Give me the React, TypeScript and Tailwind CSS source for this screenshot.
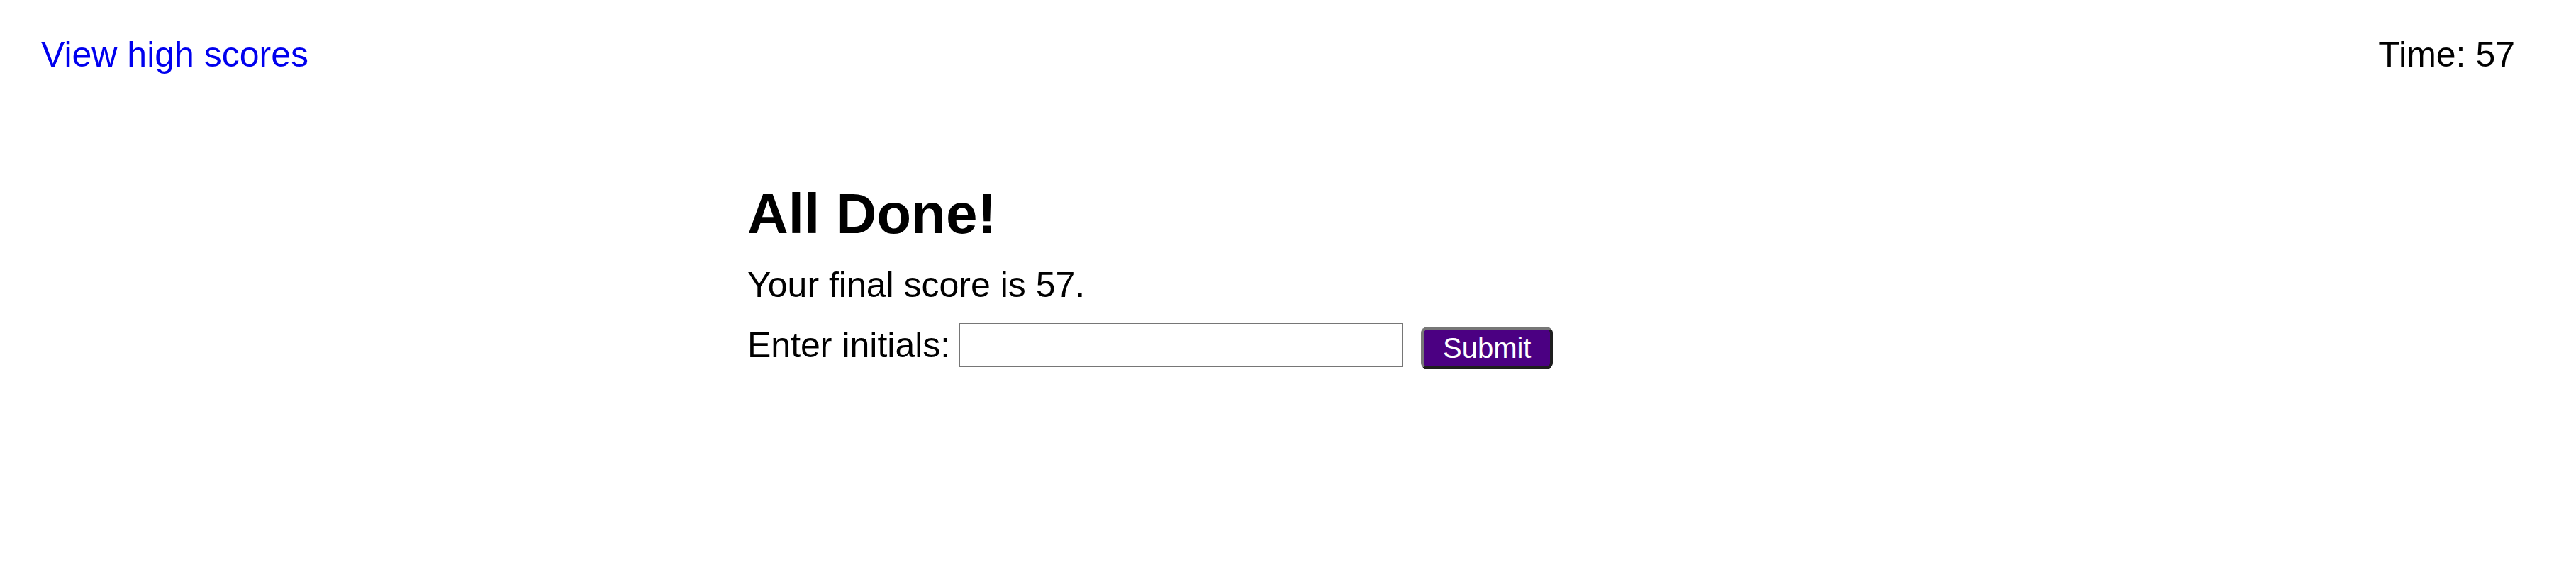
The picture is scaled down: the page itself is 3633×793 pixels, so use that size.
import React from 'react';

export default function App() {
  return (
    <div className="min-h-screen bg-white text-black font-['Liberation_Sans',Arial,sans-serif]">
      <header className="flex items-start justify-between pt-[49px] pl-[58px] pr-[86px] text-[50px] leading-[56px]">
        <a href="#" className="text-[#0000ee]">View high scores</a>
        <div>Time: 57</div>
      </header>

      <main className="mx-auto w-[1525px] pt-[152px]">
        <h1 className="text-[80px] leading-[90px] font-bold">All Done!</h1>
        <p className="mt-[27px] text-[50px] leading-[56px]">Your final score is 57.</p>
        <form className="mt-[26px] flex items-start" onSubmit={(e) => e.preventDefault()}>
          <label htmlFor="initials" className="mt-[3px] text-[50px] leading-[56px]">Enter initials:</label>
          <input
            id="initials"
            type="text"
            className="ml-[13px] w-[625px] h-[62px] border border-[#767676] bg-white px-2 text-[40px] outline-none"
          />
          <button
            type="submit"
            className="ml-[26px] mt-[5px] w-[186px] h-[60px] rounded-[9px] border-4 border-t-[#777777] border-l-[#777777] border-b-[#1e1e1e] border-r-[#1e1e1e] bg-[#4b0082] text-[40px] leading-none text-white"
          >
            Submit
          </button>
        </form>
      </main>
    </div>
  );
}
